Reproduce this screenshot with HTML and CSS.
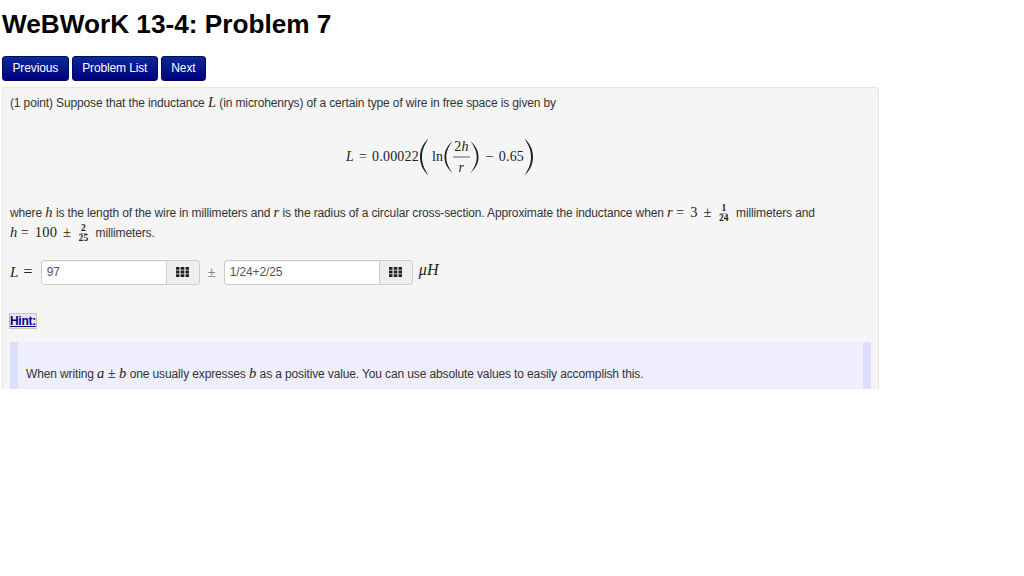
FILE: index.html
```html
<!DOCTYPE html>
<html lang="en">
<head>
<meta charset="utf-8">
<title>WeBWorK 13-4: Problem 7</title>
<link rel="stylesheet" href="styles.css">
</head>
<body>
<h1 class="title">WeBWorK 13-4: Problem 7</h1>
<nav class="nav">
  <a class="btn">Previous</a>
  <a class="btn">Problem List</a>
  <a class="btn">Next</a>
</nav>
<main class="well">
  <p class="line first">(1 point) Suppose that the inductance <i class="m ml">L</i> (in microhenrys) of a certain type of wire in free space is given by</p>
  <div class="display">
    <i class="m">L</i><span class="m op">=</span><span class="m">0.00022</span>
    <svg class="paren" width="10" height="38" viewBox="0 0 10 38"><path d="M9.500 .5C3.500 6 1 12 1 19s2.500 13 8.500 18.500C5.500 31 3 26 3 19S5.500 7 9.500 .5Z"/></svg>
    <span class="m ln">ln</span>
    <svg class="paren" width="10" height="38" viewBox="0 0 10 38"><path d="M9.500 3C4 8 1.500 13 1.500 19S4 30 9.500 35C6 30 3.300 25 3.300 19S6 8 9.500 3Z"/></svg>
    <span class="frac big"><span class="num"><span class="m">2</span><i class="m">h</i></span><i class="m den">r</i></span>
    <svg class="paren flip" width="10" height="38" viewBox="0 0 10 38"><path d="M9.500 3C4 8 1.500 13 1.500 19S4 30 9.500 35C6 30 3.300 25 3.300 19S6 8 9.500 3Z"/></svg>
    <span class="m op minus">−</span><span class="m">0.65</span>
    <svg class="paren flip" width="10" height="38" viewBox="0 0 10 38"><path d="M9.500 .5C3.500 6 1 12 1 19s2.500 13 8.500 18.500C5.500 31 3 26 3 19S5.500 7 9.500 .5Z"/></svg>
  </div>
  <div class="para">
    <p class="line row1">where <i class="m ml">h</i> is the length of the wire in millimeters and <i class="m ml">r</i> is the radius of a circular cross-section. Approximate the inductance when <i class="m ml">r</i> <span class="m ml wide">= 3 ±</span> <span class="frac small"><b class="m">1</b><b class="m">24</b></span> millimeters and</p>
    <p class="line row2"><i class="m ml">h</i> <span class="m ml wide">= 100 ±</span> <span class="frac small"><b class="m">2</b><b class="m">25</b></span> millimeters.</p>
  </div>
  <div class="answer">
    <i class="m lead">L</i><span class="m lead-eq">=</span>
    <div class="field w1"><span class="value">97</span><span class="addon"><svg width="13" height="10" viewBox="0 0 13 10"><path d="M0 0h3.500v2.800H0zM4.700 0h3.600v2.800H4.700zM9.500 0H13v2.800H9.500zM0 3.600h3.500v2.800H0zM4.700 3.600h3.600v2.800H4.700zM9.500 3.600H13v2.800H9.500zM0 7.200h3.500V10H0zM4.700 7.200h3.600V10H4.700zM9.500 7.200H13V10H9.500z"/></svg></span></div>
    <span class="m pm">±</span>
    <div class="field w2"><span class="value">1/24+2/25</span><span class="addon"><svg width="13" height="10" viewBox="0 0 13 10"><path d="M0 0h3.500v2.800H0zM4.700 0h3.600v2.800H4.700zM9.500 0H13v2.800H9.500zM0 3.600h3.500v2.800H0zM4.700 3.600h3.600v2.800H4.700zM9.500 3.600H13v2.800H9.500zM0 7.200h3.500V10H0zM4.700 7.200h3.600V10H4.700zM9.500 7.200H13V10H9.500z"/></svg></span></div>
    <i class="m unit">μH</i>
  </div>
  <div class="hintlabel"><a class="hintlink">Hint:</a></div>
  <section class="hint">
    <p class="hinttext">When writing <i class="m ml">a</i> <span class="m ml">±</span> <i class="m ml">b</i> one usually expresses <i class="m ml">b</i> as a positive value. You can use absolute values to easily accomplish this.</p>
  </section>
</main>
</body>
</html>
```
FILE: styles.css
```css
* { box-sizing: border-box; }
html, body { margin: 0; padding: 0; background: #fff; }
body {
  padding-left: 2px;
  width: 1024px;
  height: 576px;
  overflow: hidden;
  font-family: "Liberation Sans", Arial, sans-serif;
  font-size: 12px;
  letter-spacing: -.13px;
  line-height: 20px;
  color: #333;
}
.title {
  margin: 0;
  padding-top: 9px;
  height: 56px;
  font-size: 26.200px;
  letter-spacing: 0;
  line-height: 30px;
  font-weight: 700;
  color: #000;
}
.nav { display: flex; gap: 3px; height: 25px; }
.btn {
  display: block;
  height: 25px;
  padding: 0 9.500px;
  line-height: 22px;
  color: #fff;
  background: linear-gradient(#0a2a94, #00007f);
  border: 1px solid #020a5e;
  border-radius: 3px;
}
.well {
  margin-top: 6px;
  width: 877px;
  height: 302px;
  overflow: hidden;
  background: #f5f5f5;
  border: 1px solid #e5e5e5;
  border-bottom: 0;
  border-radius: 3px 3px 0 0;
  padding: 0 7px;
}
.line { margin: 0; white-space: nowrap; }
.first { padding-top: 5px; height: 25px; }
.m { font-family: "Liberation Serif", "DejaVu Serif", serif; font-size: 14px; line-height: 0; letter-spacing: .2px; color: #222; }
.ml { font-size: 14.500px; }
.wide { word-spacing: 2px; }
.display {
  display: flex;
  align-items: center;
  justify-content: center;
  height: 46px;
  margin-top: 21px;
  padding-right: 1px;
}
.op { margin: 0 5px; }
.minus { margin: 0 5px 0 6px; }
.ln { margin: 0 0 0 3px; font-size: 14px; }
.paren { display: block; flex: none; fill: #222; }
.flip { transform: scaleX(-1); }
.frac {
  display: inline-flex;
  flex-direction: column;
  align-items: center;
  line-height: 1;
  vertical-align: middle;
}
.big .num { border-bottom: 2px solid #aaa; padding: 0 1px 2px; line-height: 14px; }
.big .den { line-height: 14px; padding-top: 3px; }
.small { margin: -4px 3px; }
.small b { font-size: 9.500px; line-height: 9px; font-weight: 700; padding: 0 1px; }
.small b:first-child { border-bottom: 1px solid #aaa; }
.para { margin-top: 23px; }
.answer { display: flex; align-items: center; height: 26px; margin-top: 16px; }
.lead { font-size: 15px; }
.lead-eq { margin: 0 8px 0 5px; font-size: 16px; }
.field {
  display: flex;
  height: 25px;
  background: #fff;
  border: 1px solid #ccc;
  border-radius: 3px;
  box-shadow: inset 0 1px 1px rgba(0,0,0,.06);
}
.w1 { width: 159px; }
.w2 { width: 189px; }
.value { flex: 1; padding-left: 5px; line-height: 22px; color: #555; }
.addon {
  width: 33px;
  display: flex;
  align-items: center;
  justify-content: center;
  background: #eee;
  border-left: 1px solid #ccc;
  border-radius: 0 3px 3px 0;
}
.addon svg { fill: #222; display: block; }
.pm { margin: 0 6px; color: #777; width: 12px; text-align: center; font-size: 15px; }
.unit { margin: -5px 0 0 6px; font-size: 16px; }
.hintlabel { margin-top: 26px; height: 21px; }
.hintlink {
  color: #00007f;
  text-decoration: underline;
  font-weight: 700;
  letter-spacing: -.3px;
  background: #e8e8f4;
  outline: 1px solid #c8c8b0;
}
.hint {
  margin-top: 10px;
  width: 861px;
  height: 48px;
  background: #eeeefe;
  border-left: 8px solid #ddf;
  border-right: 8px solid #ddf;
  padding: 22px 8px 0;
}
.hinttext { margin: 0; line-height: 20px; }
```
